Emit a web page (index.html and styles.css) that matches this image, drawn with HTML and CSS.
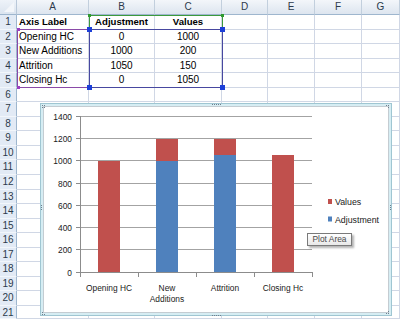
FILE: index.html
```html
<!DOCTYPE html>
<html>
<head>
<meta charset="utf-8">
<link rel="stylesheet" href="styles.css">
</head>
<body>
<div class="sheet">
  <div class="row head">
    <div class="corner"><span class="tri"></span></div>
    <div class="ch">A</div><div class="ch">B</div><div class="ch">C</div><div class="ch">D</div><div class="ch">E</div><div class="ch">F</div><div class="ch">G</div>
  </div>
  <div class="row">
    <div class="rh">1</div><div class="cell b">Axis Label</div><div class="cell b c">Adjustment</div><div class="cell b c">Values</div><div class="cell"></div><div class="cell"></div><div class="cell"></div><div class="cell"></div>
  </div>
  <div class="row">
    <div class="rh">2</div><div class="cell">Opening HC</div><div class="cell c">0</div><div class="cell c">1000</div><div class="cell"></div><div class="cell"></div><div class="cell"></div><div class="cell"></div>
  </div>
  <div class="row">
    <div class="rh">3</div><div class="cell">New Additions</div><div class="cell c">1000</div><div class="cell c">200</div><div class="cell"></div><div class="cell"></div><div class="cell"></div><div class="cell"></div>
  </div>
  <div class="row">
    <div class="rh">4</div><div class="cell">Attrition</div><div class="cell c">1050</div><div class="cell c">150</div><div class="cell"></div><div class="cell"></div><div class="cell"></div><div class="cell"></div>
  </div>
  <div class="row">
    <div class="rh">5</div><div class="cell">Closing Hc</div><div class="cell c">0</div><div class="cell c">1050</div><div class="cell"></div><div class="cell"></div><div class="cell"></div><div class="cell"></div>
  </div>
  <div class="row"><div class="rh">6</div><div class="cell"></div><div class="cell"></div><div class="cell"></div><div class="cell"></div><div class="cell"></div><div class="cell"></div><div class="cell"></div></div>
  <div class="row"><div class="rh">7</div><div class="cell"></div><div class="cell"></div><div class="cell"></div><div class="cell"></div><div class="cell"></div><div class="cell"></div><div class="cell"></div></div>
  <div class="row"><div class="rh">8</div><div class="cell"></div><div class="cell"></div><div class="cell"></div><div class="cell"></div><div class="cell"></div><div class="cell"></div><div class="cell"></div></div>
  <div class="row"><div class="rh">9</div><div class="cell"></div><div class="cell"></div><div class="cell"></div><div class="cell"></div><div class="cell"></div><div class="cell"></div><div class="cell"></div></div>
  <div class="row"><div class="rh">10</div><div class="cell"></div><div class="cell"></div><div class="cell"></div><div class="cell"></div><div class="cell"></div><div class="cell"></div><div class="cell"></div></div>
  <div class="row"><div class="rh">11</div><div class="cell"></div><div class="cell"></div><div class="cell"></div><div class="cell"></div><div class="cell"></div><div class="cell"></div><div class="cell"></div></div>
  <div class="row"><div class="rh">12</div><div class="cell"></div><div class="cell"></div><div class="cell"></div><div class="cell"></div><div class="cell"></div><div class="cell"></div><div class="cell"></div></div>
  <div class="row"><div class="rh">13</div><div class="cell"></div><div class="cell"></div><div class="cell"></div><div class="cell"></div><div class="cell"></div><div class="cell"></div><div class="cell"></div></div>
  <div class="row"><div class="rh">14</div><div class="cell"></div><div class="cell"></div><div class="cell"></div><div class="cell"></div><div class="cell"></div><div class="cell"></div><div class="cell"></div></div>
  <div class="row"><div class="rh">15</div><div class="cell"></div><div class="cell"></div><div class="cell"></div><div class="cell"></div><div class="cell"></div><div class="cell"></div><div class="cell"></div></div>
  <div class="row"><div class="rh">16</div><div class="cell"></div><div class="cell"></div><div class="cell"></div><div class="cell"></div><div class="cell"></div><div class="cell"></div><div class="cell"></div></div>
  <div class="row"><div class="rh">17</div><div class="cell"></div><div class="cell"></div><div class="cell"></div><div class="cell"></div><div class="cell"></div><div class="cell"></div><div class="cell"></div></div>
  <div class="row"><div class="rh">18</div><div class="cell"></div><div class="cell"></div><div class="cell"></div><div class="cell"></div><div class="cell"></div><div class="cell"></div><div class="cell"></div></div>
  <div class="row"><div class="rh">19</div><div class="cell"></div><div class="cell"></div><div class="cell"></div><div class="cell"></div><div class="cell"></div><div class="cell"></div><div class="cell"></div></div>
  <div class="row"><div class="rh">20</div><div class="cell"></div><div class="cell"></div><div class="cell"></div><div class="cell"></div><div class="cell"></div><div class="cell"></div><div class="cell"></div></div>
  <div class="row last"><div class="rh">21</div><div class="cell"></div><div class="cell"></div><div class="cell"></div><div class="cell"></div><div class="cell"></div><div class="cell"></div><div class="cell"></div></div>

  <div class="sel sel-cat"></div>
  <div class="sel sel-name"></div>
  <div class="sel sel-val"></div>
  <span class="hd hd-blue h1"></span><span class="hd hd-blue h2"></span><span class="hd hd-blue h3"></span><span class="hd hd-blue h4"></span>
  <span class="hd hd-green g1"></span><span class="hd hd-green g2"></span>
  <span class="hd hd-purple p1"></span><span class="hd hd-purple p2"></span>

  <div class="chart">
    <svg class="chart-svg" width="352" height="213" viewBox="0 0 352 213">
      <g transform="translate(-40 -103)">
        <g class="grid">
          <line x1="80" y1="116.5" x2="312" y2="116.5"/>
          <line x1="80" y1="138.5" x2="312" y2="138.5"/>
          <line x1="80" y1="160.5" x2="312" y2="160.5"/>
          <line x1="80" y1="183.5" x2="312" y2="183.5"/>
          <line x1="80" y1="205.5" x2="312" y2="205.5"/>
          <line x1="80" y1="227.5" x2="312" y2="227.5"/>
          <line x1="80" y1="249.5" x2="312" y2="249.5"/>
        </g>
        <rect x="98" y="161" width="22" height="111" fill="#c0504d"/>
        <rect x="156" y="161" width="22" height="111" fill="#4f81bd"/>
        <rect x="156" y="139" width="22" height="22" fill="#c0504d"/>
        <rect x="214" y="155" width="22" height="117" fill="#4f81bd"/>
        <rect x="214" y="139" width="22" height="16" fill="#c0504d"/>
        <rect x="272" y="155" width="22" height="117" fill="#c0504d"/>
        <g class="axis">
          <line x1="80.5" y1="116" x2="80.5" y2="273"/>
          <line x1="80" y1="272.5" x2="313" y2="272.5"/>
          <line x1="76" y1="116.5" x2="80" y2="116.5"/>
          <line x1="76" y1="138.5" x2="80" y2="138.5"/>
          <line x1="76" y1="160.5" x2="80" y2="160.5"/>
          <line x1="76" y1="183.5" x2="80" y2="183.5"/>
          <line x1="76" y1="205.5" x2="80" y2="205.5"/>
          <line x1="76" y1="227.5" x2="80" y2="227.5"/>
          <line x1="76" y1="249.5" x2="80" y2="249.5"/>
          <line x1="76" y1="272.5" x2="80" y2="272.5"/>
          <line x1="80.5" y1="272" x2="80.5" y2="277"/>
          <line x1="138.5" y1="272" x2="138.5" y2="277"/>
          <line x1="196.5" y1="272" x2="196.5" y2="277"/>
          <line x1="254.5" y1="272" x2="254.5" y2="277"/>
          <line x1="312.5" y1="272" x2="312.5" y2="277"/>
        </g>
        <g class="ylab">
          <text x="72" y="119.5">1400</text>
          <text x="72" y="141.5">1200</text>
          <text x="72" y="163.5">1000</text>
          <text x="72" y="186.5">800</text>
          <text x="72" y="208.5">600</text>
          <text x="72" y="230.5">400</text>
          <text x="72" y="252.5">200</text>
          <text x="72" y="275.5">0</text>
        </g>
        <g class="xlab">
          <text x="109" y="291">Opening HC</text>
          <text x="167" y="291">New</text>
          <text x="167" y="302">Additions</text>
          <text x="225" y="291">Attrition</text>
          <text x="283" y="291">Closing Hc</text>
        </g>
        <rect x="328" y="199" width="4" height="5" fill="#c0504d"/>
        <text class="leg" x="335" y="205">Values</text>
        <rect x="328" y="216.5" width="4" height="5" fill="#4f81bd"/>
        <text class="leg" x="335" y="222.5">Adjustment</text>
        <g class="dots">
          <rect x="42" y="105" width="1" height="1"/><rect x="44" y="105" width="1" height="1"/><rect x="42" y="107" width="1" height="1"/><rect x="44" y="107" width="1" height="1"/>
          <rect x="212" y="104" width="1" height="1"/><rect x="214" y="104" width="1" height="1"/><rect x="216" y="104" width="1" height="1"/><rect x="218" y="104" width="1" height="1"/><rect x="220" y="104" width="1" height="1"/>
          <rect x="386" y="105" width="1" height="1"/><rect x="388" y="105" width="1" height="1"/><rect x="388" y="107" width="1" height="1"/>
          <rect x="41" y="205" width="1" height="1"/><rect x="41" y="207" width="1" height="1"/><rect x="41" y="209" width="1" height="1"/>
          <rect x="390" y="205" width="1" height="1"/><rect x="390" y="207" width="1" height="1"/><rect x="390" y="209" width="1" height="1"/>
          <rect x="42" y="312" width="1" height="1"/><rect x="42" y="314" width="1" height="1"/><rect x="44" y="314" width="1" height="1"/>
          <rect x="212" y="315" width="1" height="1"/><rect x="214" y="315" width="1" height="1"/><rect x="216" y="315" width="1" height="1"/><rect x="218" y="315" width="1" height="1"/><rect x="220" y="315" width="1" height="1"/>
          <rect x="386" y="313" width="1" height="1"/><rect x="388" y="313" width="1" height="1"/><rect x="388" y="311" width="1" height="1"/>
        </g>
      </g>
    </svg>
  </div>
  <div class="tooltip">Plot Area</div>
</div>
</body>
</html>
```

FILE: styles.css
```css
html, body {
  margin: 0;
  padding: 0;
  background: #ffffff;
}
.sheet {
  position: relative;
  width: 400px;
  height: 319px;
  overflow: hidden;
  font-family: "Liberation Sans", Arial, sans-serif;
  color: #000;
}
.row {
  display: grid;
  grid-template-columns: 17px 72px 66px 67px 46px 47px 47px 38px;
  height: 14.55px;
}
.row.head {
  height: 15px;
}
.row.last {
  height: 13px;
}
.row.last > div {
  line-height: 13px;
}
.row > div {
  box-sizing: border-box;
  white-space: nowrap;
  overflow: hidden;
}
.corner {
  position: relative;
  background: linear-gradient(#eef3f9, #dbe4ef);
  border-right: 1px solid #b9c8d9;
  border-bottom: 1px solid #9eb6ce;
}
.tri {
  position: absolute;
  right: 2px;
  bottom: 2px;
  width: 0;
  height: 0;
  border-left: 10px solid transparent;
  border-bottom: 10px solid #f3f6fa;
}
.ch {
  background: linear-gradient(#f3f6fa, #dde5ef);
  border-right: 1px solid #c2cfdd;
  border-bottom: 1px solid #9eb6ce;
  text-align: center;
  font-size: 10px;
  line-height: 14px;
  color: #2c3a4c;
}
.rh {
  background: #e2eaf5;
  border-right: 1px solid #9eb6ce;
  border-bottom: 1px solid #f2f6fb;
  text-align: center;
  font-size: 10px;
  line-height: 14px;
  color: #2c3a4c;
}
.cell {
  border-right: 1px solid #d0d7e5;
  border-bottom: 1px solid #d0d7e5;
  font-size: 10px;
  line-height: 14px;
  padding: 0 2px;
}
.cell.b {
  font-weight: bold;
  font-size: 9.6px;
}
.cell.c {
  text-align: center;
}

/* source data range outlines */
.sel {
  position: absolute;
  box-sizing: border-box;
  pointer-events: none;
}
.sel-cat {
  left: 17px;
  top: 29px;
  width: 73px;
  height: 59px;
  border: 1px solid #8a4aa8;
}
.sel-name {
  left: 89px;
  top: 15px;
  width: 134px;
  height: 15px;
  border: 1px solid #3c9a3c;
  border-bottom: none;
}
.sel-val {
  left: 89px;
  top: 29px;
  width: 134px;
  height: 59px;
  border: 1px solid #4848a0;
}
.hd {
  position: absolute;
  display: block;
}
.hd-blue {
  width: 5px;
  height: 5px;
  background: #1c3fd8;
}
.h1 { left: 87px; top: 27px; }
.h2 { left: 220px; top: 27px; }
.h3 { left: 87px; top: 85px; }
.h4 { left: 220px; top: 85px; }
.hd-green {
  width: 3px;
  height: 3px;
  background: #2f9a2f;
}
.g1 { left: 88px; top: 14px; }
.g2 { left: 221px; top: 14px; }
.hd-purple {
  width: 3px;
  height: 3px;
  background: #9a3fbf;
}
.p1 { left: 17px; top: 28px; }
.p2 { left: 17px; top: 86px; }

/* chart */
.chart {
  position: absolute;
  left: 40px;
  top: 103px;
  width: 352px;
  height: 213px;
  box-sizing: border-box;
  background: #ffffff;
  border: 1px solid #9fc6d2;
  box-shadow: inset 0 0 0 2px #d6edf3, inset 0 0 0 3px #c4ccd2;
}
.chart-svg {
  position: absolute;
  left: -1px;
  top: -1px;
  overflow: visible;
  font-family: "Liberation Sans", Arial, sans-serif;
}
.grid line {
  stroke: #a3a3a3;
  stroke-width: 1;
}
.axis line {
  stroke: #8c8c8c;
  stroke-width: 1;
}
.ylab text {
  font-size: 8.4px;
  fill: #1a1a1a;
  text-anchor: end;
}
.xlab text {
  font-size: 8.4px;
  fill: #1a1a1a;
  text-anchor: middle;
}
.leg {
  font-size: 8.8px;
  fill: #1a1a1a;
}
.dots rect {
  fill: #6f7f8e;
}
.tooltip {
  position: absolute;
  left: 307px;
  top: 233px;
  width: 45px;
  height: 13px;
  box-sizing: border-box;
  border: 1px solid #7a7a7a;
  background: linear-gradient(#ffffff, #e8e8e8);
  box-shadow: 2px 2px 2px rgba(0, 0, 0, 0.3);
  font-family: "Liberation Sans", Arial, sans-serif;
  font-size: 8.4px;
  line-height: 11px;
  color: #4a4a4a;
  text-align: center;
  white-space: nowrap;
}
```
